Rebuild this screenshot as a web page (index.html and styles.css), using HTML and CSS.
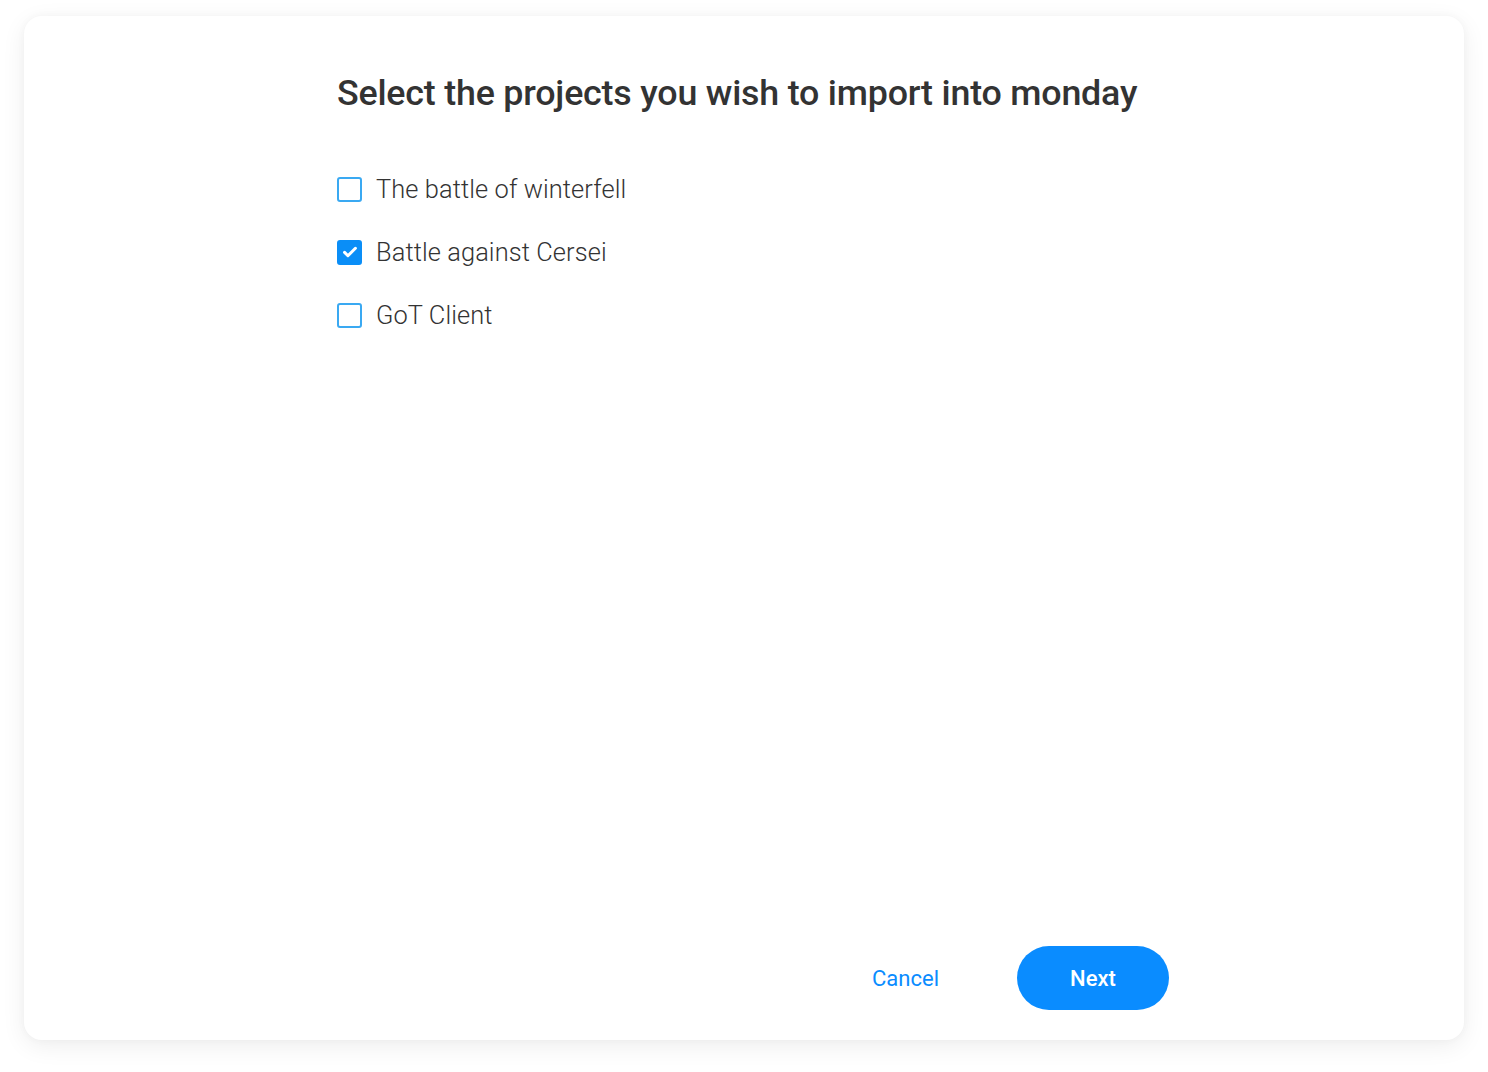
FILE: index.html
```html
<!DOCTYPE html>
<html>
<head>
<meta charset="utf-8">
<link rel="stylesheet" href="styles.css">
</head>
<body>
<div class="card">
  <div class="content">
    <h1 class="title">Select the projects you wish to import into monday</h1>
    <ul class="list">
      <li class="item"><span class="box"></span><span class="label">The battle of winterfell</span></li>
      <li class="item"><span class="box checked"><svg viewBox="0 0 24 24" width="20" height="20"><path d="M5.5 12.5l4 4L18.5 7.5" fill="none" stroke="#fff" stroke-width="3.6" stroke-linecap="round" stroke-linejoin="round"/></svg></span><span class="label">Battle against Cersei</span></li>
      <li class="item"><span class="box"></span><span class="label">GoT Client</span></li>
    </ul>
  </div>
  <div class="footer">
    <button class="cancel">Cancel</button>
    <button class="next">Next</button>
  </div>
</div>
</body>
</html>
```
FILE: styles.css
```css
html, body {
  margin: 0;
  padding: 0;
  background: #fff;
}
body {
  font-family: Roboto, "Liberation Sans", sans-serif;
  padding: 16px 24px 32px 24px;
  height: 1072px;
  box-sizing: border-box;
}
.card {
  width: 1440px;
  height: 1024px;
  box-sizing: border-box;
  background: #fff;
  border-radius: 18px;
  box-shadow: 0 6px 24px rgba(0,0,0,0.07), 0 0 8px rgba(0,0,0,0.03);
  display: flex;
  flex-direction: column;
  justify-content: space-between;
  padding: 0 295px 30px 313px;
}
.content {
  padding-top: 56px;
}
.title {
  margin: 0;
  font-size: 35.8px;
  font-weight: 500;
  color: #333;
  letter-spacing: -0.2px;
  line-height: 42px;
}
.list {
  list-style: none;
  margin: 62px 0 0 0;
  padding: 0;
  display: flex;
  flex-direction: column;
  gap: 37px;
}
.item {
  display: flex;
  align-items: center;
  gap: 14px;
  height: 26px;
}
.box {
  width: 25px;
  height: 25px;
  box-sizing: border-box;
  border: 2px solid #3aa9f2;
  border-radius: 3px;
  display: flex;
  align-items: center;
  justify-content: center;
}
.box.checked {
  background: #0a8ef7;
  border-color: #0a8ef7;
}
.label {
  font-size: 25.4px;
  font-weight: 300;
  color: #333;
  letter-spacing: 0.1px;
}
.footer {
  display: flex;
  justify-content: flex-end;
  align-items: center;
  gap: 78px;
}
.cancel {
  background: none;
  border: none;
  padding: 0;
  font-family: inherit;
  font-size: 22px;
  font-weight: 400;
  color: #0a8cff;
}
.next {
  width: 152px;
  height: 64px;
  border: none;
  border-radius: 32px;
  background: #0a8cff;
  color: #fff;
  font-family: inherit;
  font-size: 22px;
  font-weight: 500;
}
```
